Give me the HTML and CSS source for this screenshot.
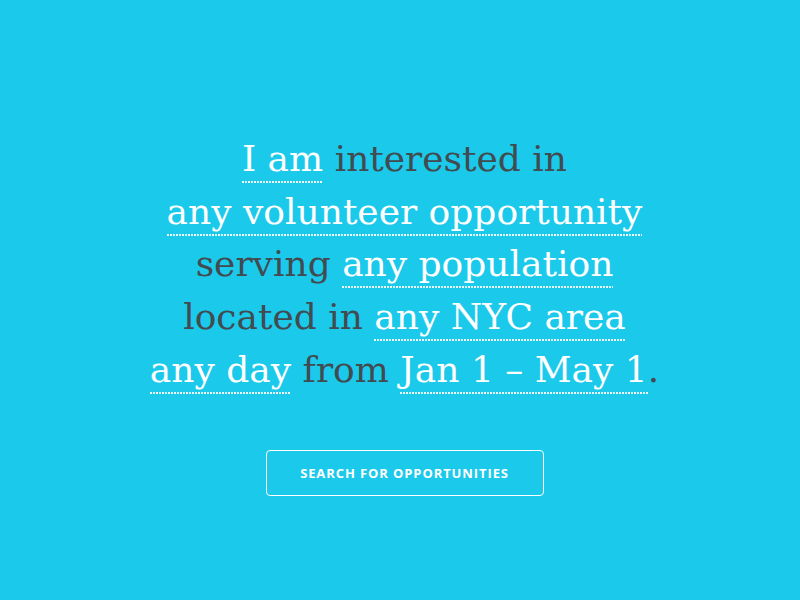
FILE: index.html
```html
<!DOCTYPE html>
<html lang="en">
<head>
<meta charset="utf-8">
<title>Volunteer search</title>
<link rel="stylesheet" href="styles.css">
</head>
<body>
<main class="page">
  <p class="sentence">
    <span class="choice">I am</span> interested in<br>
    <span class="choice">any volunteer opportunity</span><br>
    serving <span class="choice">any population</span><br>
    located in <span class="choice">any NYC area</span><br>
    <span class="choice">any day</span> from <span class="choice">Jan 1 – May 1</span>.
  </p>
  <button class="search-btn" type="button">SEARCH FOR OPPORTUNITIES</button>
</main>
</body>
</html>
```

FILE: styles.css
```css
html, body {
  margin: 0;
  height: 100%;
  background: #1bc9eb;
}
.page {
  display: flex;
  flex-direction: column;
  align-items: center;
  padding-top: 133px;
  padding-left: 9px;
}
.sentence {
  margin: 0;
  font-family: "DejaVu Serif", "Liberation Serif", serif;
  font-size: 36px;
  line-height: 52.7px;
  color: #414b50;
  text-align: center;
}
.choice {
  color: #ffffff;
  padding-bottom: 4px;
  background-image: repeating-linear-gradient(to right, rgba(255,255,255,0.9) 0 2px, transparent 2px 3px);
  background-size: 100% 2px;
  background-repeat: no-repeat;
  background-position: left bottom;
}
.search-btn {
  margin-top: 53px;
  width: 278px;
  height: 46px;
  border: 1px solid #ffffff;
  border-radius: 4px;
  background: transparent;
  color: #ffffff;
  font-family: "Open Sans", "Liberation Sans", sans-serif;
  font-weight: 700;
  font-size: 13px;
  letter-spacing: 0.9px;
}
```
